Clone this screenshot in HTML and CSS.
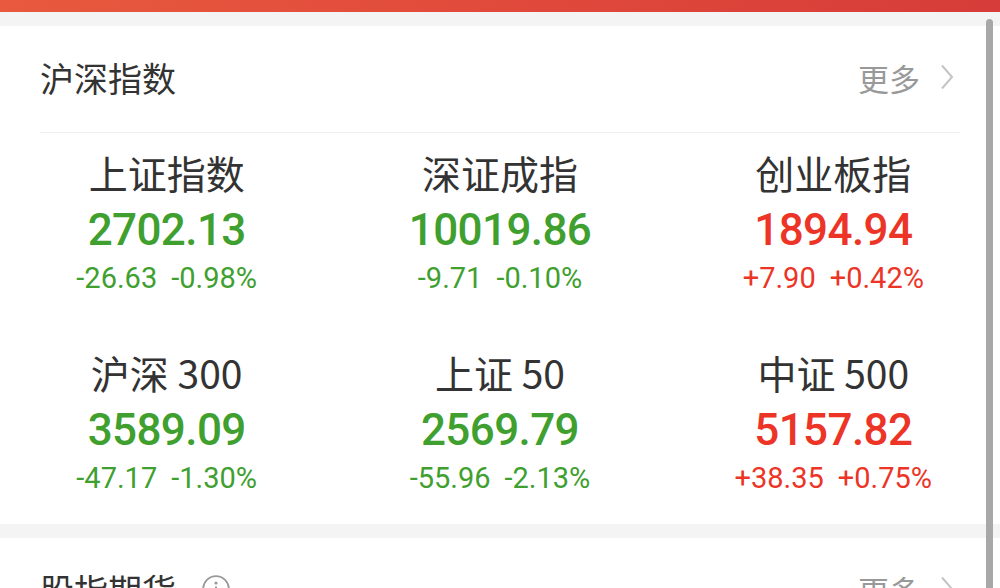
FILE: index.html
```html
<!DOCTYPE html>
<html lang="zh-CN">
<head>
<meta charset="utf-8">
<title>沪深指数</title>
<link rel="stylesheet" href="styles.css">
</head>
<body>
<div class="page">
  <div class="topbar"></div>
  <section class="card">
    <div class="card-head">
      <h2 class="card-title">沪深指数</h2>
      <a class="more">更多<svg class="chev" viewBox="0 0 14 26" width="14" height="26"><polyline points="2,1.5 12,13 2,24.5" fill="none" stroke="#c4c4c4" stroke-width="2"/></svg></a>
    </div>
    <div class="grid">
      <div class="cell down">
        <div class="name">上证指数</div>
        <div class="value">2702.13</div>
        <div class="change"><span>-26.63</span><span>-0.98%</span></div>
      </div>
      <div class="cell down">
        <div class="name">深证成指</div>
        <div class="value">10019.86</div>
        <div class="change"><span>-9.71</span><span>-0.10%</span></div>
      </div>
      <div class="cell up">
        <div class="name">创业板指</div>
        <div class="value">1894.94</div>
        <div class="change"><span>+7.90</span><span>+0.42%</span></div>
      </div>
      <div class="cell down">
        <div class="name">沪深 300</div>
        <div class="value">3589.09</div>
        <div class="change"><span>-47.17</span><span>-1.30%</span></div>
      </div>
      <div class="cell down">
        <div class="name">上证 50</div>
        <div class="value">2569.79</div>
        <div class="change"><span>-55.96</span><span>-2.13%</span></div>
      </div>
      <div class="cell up">
        <div class="name">中证 500</div>
        <div class="value">5157.82</div>
        <div class="change"><span>+38.35</span><span>+0.75%</span></div>
      </div>
    </div>
  </section>
  <section class="card">
    <div class="card-head plain">
      <h2 class="card-title">股指期货<svg class="info" viewBox="0 0 28 28" width="28" height="28"><circle cx="14" cy="14" r="12.8" fill="none" stroke="#9a9a9a" stroke-width="1.8"/><circle cx="14" cy="8" r="1.6" fill="#9a9a9a"/><rect x="13" y="11.5" width="2" height="9" fill="#9a9a9a"/></svg></h2>
      <a class="more">更多<svg class="chev" viewBox="0 0 14 26" width="14" height="26"><polyline points="2,1.5 12,13 2,24.5" fill="none" stroke="#c4c4c4" stroke-width="2"/></svg></a>
    </div>
  </section>
  <div class="scrollbar"></div>
</div>
</body>
</html>
```
FILE: styles.css
```css
html, body {
  margin: 0;
  padding: 0;
  height: 100%;
  overflow: hidden;
  background: #f4f4f4;
}
.page {
  position: relative;
  height: 588px;
  overflow: hidden;
  font-family: "Noto Sans CJK SC", "Noto Sans", sans-serif;
  color: #333;
}
.topbar {
  height: 12px;
  background: linear-gradient(90deg, #e8593e 0%, #e04a3b 50%, #d63c39 100%);
  margin-bottom: 14px;
}
.card {
  background: #fff;
  margin-bottom: 14px;
}
.card-head {
  margin: 0 40px;
  height: 106px;
  border-bottom: 1px solid #eeeeee;
  display: flex;
  align-items: center;
  justify-content: space-between;
}
.card-head.plain {
  border-bottom: none;
}
.card-title {
  margin: 0;
  font-size: 34px;
  font-weight: 400;
  color: #333;
  display: flex;
  align-items: center;
  gap: 26px;
  position: relative;
  top: -2px;
}
.more {
  display: flex;
  align-items: center;
  gap: 20px;
  font-size: 31px;
  color: #999;
  margin-right: 6px;
  position: relative;
  top: -2px;
}
.chev {
  display: block;
}
.info {
  display: block;
}
.grid {
  display: grid;
  grid-template-columns: repeat(3, 1fr);
  row-gap: 37px;
  padding-bottom: 28px;
}
.cell {
  display: flex;
  flex-direction: column;
  align-items: center;
  padding-top: 11px;
}
.name {
  font-size: 39px;
  line-height: 56px;
  height: 56px;
  color: #333;
  white-space: nowrap;
}
.value {
  font-family: Roboto, "Noto Sans", sans-serif;
  font-weight: 500;
  font-size: 44px;
  letter-spacing: -0.6px;
  line-height: 61px;
  height: 61px;
}
.change {
  font-family: Roboto, "Noto Sans", sans-serif;
  font-size: 29px;
  line-height: 35px;
  height: 35px;
  display: flex;
  gap: 14px;
}
.down .value, .down .change { color: #40a02f; }
.up .value, .up .change { color: #ec3427; }
.scrollbar {
  position: absolute;
  top: 19px;
  left: 986px;
  width: 7px;
  height: 600px;
  border-radius: 4px;
  background: #a8a8a8;
}
```
